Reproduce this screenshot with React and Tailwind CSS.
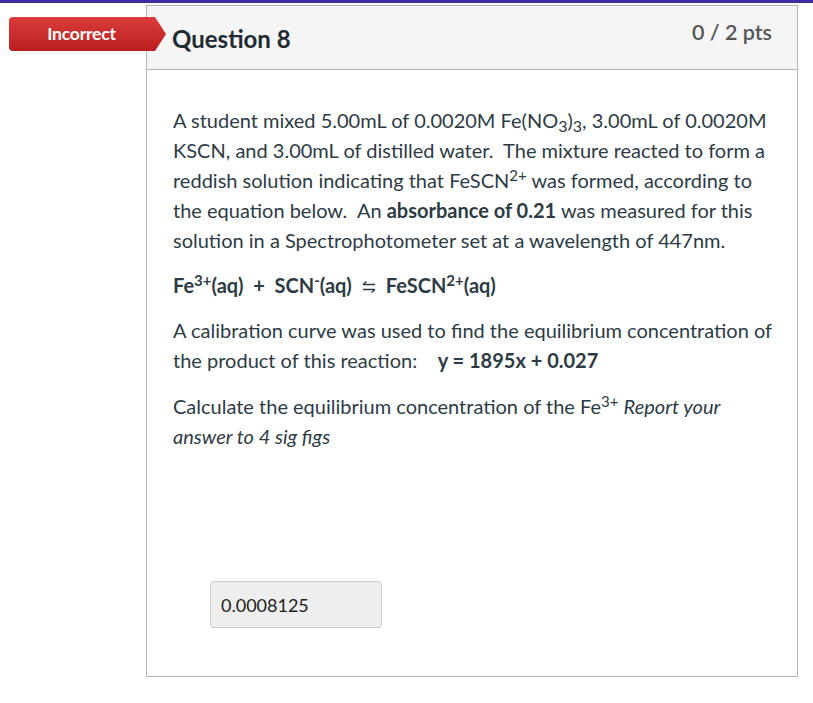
import React from 'react'

function Badge() {
  return (
    <div className="relative z-10 ml-[9px] mt-[12px] w-[157px] h-[34px]">
      <div className="w-full h-full rounded-l-[4px] bg-gradient-to-b from-[#dc3b3b] to-[#b91f1f] [clip-path:polygon(0_0,146px_0,157px_50%,146px_100%,0_100%)] flex items-center justify-center pr-[12px]">
        <span className="text-white font-bold text-[17.5px] tracking-[-0.2px]">Incorrect</span>
      </div>
    </div>
  )
}

function Equilibrium() {
  return (
    <svg width="18" height="14" viewBox="0 0 18 14" className="inline-block align-middle mx-[8px] -mt-[2px]">
      <path d="M3 4.5H15M3 4.5L6.5 1.5" stroke="#2d3b45" strokeWidth="1.4" fill="none" />
      <path d="M3 9.5H15M15 9.5L11.5 12.5" stroke="#2d3b45" strokeWidth="1.4" fill="none" />
    </svg>
  )
}

const sup = 'text-[0.75em]'

export default function App() {
  return (
    <div className="min-h-screen bg-white text-[#2d3b45] font-['Lato','Liberation_Sans',sans-serif]">
      <div className="h-[3px] bg-[#3b2fa5]" />
      <div className="flex pt-[2px]">
        <div className="w-[146px] shrink-0">
          <Badge />
        </div>
        <div className="w-[652px] h-[672px] border border-[#b4b4b4] flex flex-col">
          <div className="h-[64px] bg-[#f5f5f5] border-b border-[#b4b4b4] flex justify-between px-[25px]">
            <div className="mt-[18px] text-[24px] leading-[30px] font-bold text-[#1f2a33]">Question 8</div>
            <div className="mt-[12px] text-[21.5px] leading-[28px] font-semibold text-[#555]">0 / 2 pts</div>
          </div>
          <div className="px-[26px] pt-[35px] text-[20px] leading-[30px] whitespace-nowrap">
            <p>
              A student mixed 5.00mL of 0.0020M Fe(NO<sub className="text-[0.8em]">3</sub>)<sub className="text-[0.8em]">3</sub>, 3.00mL of 0.0020M<br />
              KSCN, and 3.00mL of distilled water.&nbsp; The mixture reacted to form a<br />
              reddish solution indicating that FeSCN<sup className={sup}>2+</sup> was formed, according to<br />
              the equation below.&nbsp; An <b>absorbance of 0.21</b> was measured for this<br />
              solution in a Spectrophotometer set at a wavelength of 447nm.
            </p>
            <p className="mt-[15px] font-bold">
              Fe<sup className={sup}>3+</sup>(aq)&nbsp; +&nbsp; SCN<sup className={sup}>-</sup>(aq)
              <Equilibrium />
              FeSCN<sup className={sup}>2+</sup>(aq)
            </p>
            <p className="mt-[15px]">
              A calibration curve was used to find the equilibrium concentration of<br />
              the product of this reaction:&nbsp;&nbsp;&nbsp; <b>y = 1895x + 0.027</b>
            </p>
            <p className="mt-[16px]">
              Calculate the equilibrium concentration of the Fe<sup className={sup}>3+</sup> <i>Report your</i><br />
              <i>answer to 4 sig figs</i>
            </p>
            <div className="mt-[130px] ml-[37px] w-[172px] h-[47px] bg-[#eeeeee] border border-[#cccccc] rounded-[4px] flex items-center px-[10px] text-[18px] text-[#222]">
              0.0008125
            </div>
          </div>
        </div>
      </div>
    </div>
  )
}
